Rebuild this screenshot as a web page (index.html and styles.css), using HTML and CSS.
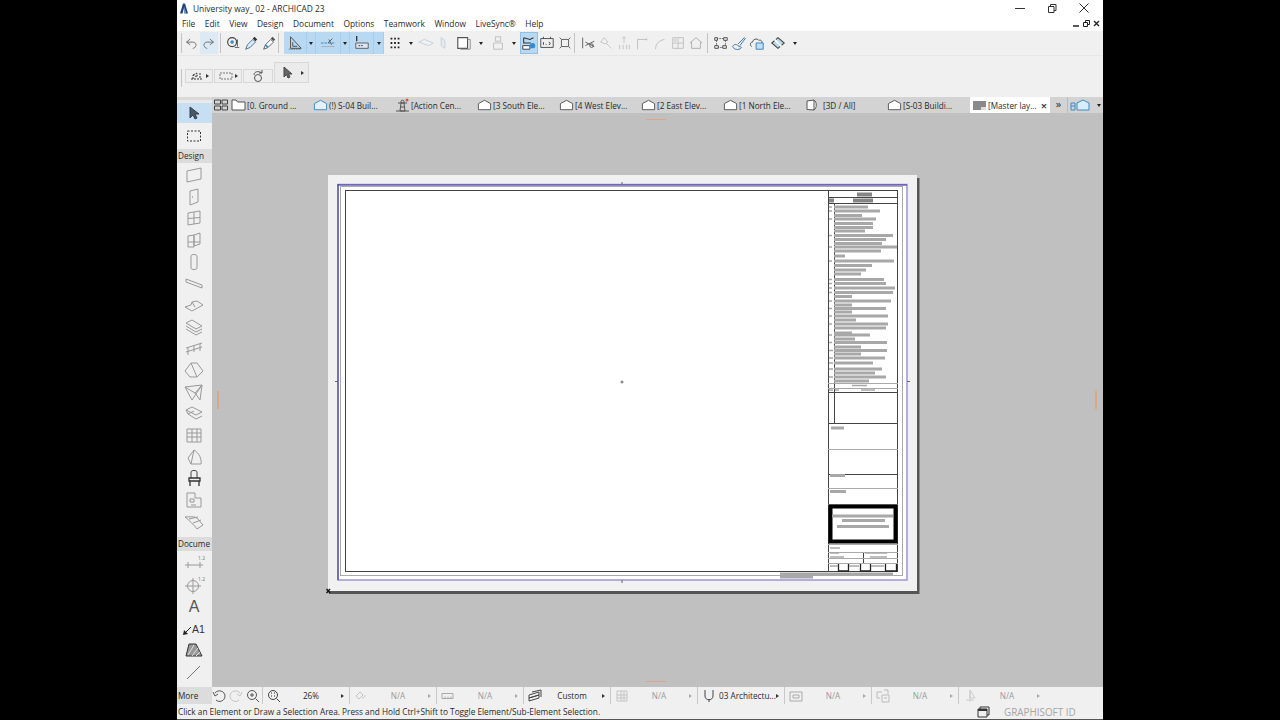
FILE: index.html
```html
<!DOCTYPE html>
<html lang="en">
<head>
    <meta charset="UTF-8">
    <title>University way_ 02 - ARCHICAD 23</title>
    <link rel="stylesheet" href="styles.css">
</head>
<body>
<svg class="defs" width="0" height="0">
    <symbol id="arch" viewBox="0 0 16 12"><path d="M1.5 11V4.5L8 1l6.500 3.500V11z" fill="#fff" stroke="#555"/></symbol>
    <symbol id="archblue" viewBox="0 0 16 12"><path d="M1.500 11V4.500L8 1l6.500 3.500V11z" fill="#e4f1fb" stroke="#3d8ac7"/></symbol>
</svg>
<div class="window">
    <div class="titlebar">
        <svg class="applogo" width="10" height="11" viewBox="0 0 10 11"><path d="M1 10.500L4 .5h2l3 10H6.500L5 5 3.500 10.500z" fill="#23407a"/><path d="M5 3l2.500 7.500H5z" fill="#6d8fc4"/></svg>
        <span class="apptitle">University way_ 02 - ARCHICAD 23</span>
        <div class="winctl">
            <svg width="12" height="12" viewBox="0 0 12 12"><path d="M1 6.500h10" stroke="#333"/></svg>
            <svg width="12" height="12" viewBox="0 0 12 12"><path d="M2.500 4.500h5.500v6h-5.500zM4.500 4.500v-2h5.500v6h-2" fill="none" stroke="#333"/></svg>
            <svg width="12" height="12" viewBox="0 0 12 12"><path d="M1.500 1.500l9 9M10.500 1.500l-9 9" stroke="#333"/></svg>
        </div>
    </div>
    <div class="menubar">
        <span>File</span><span>Edit</span><span>View</span><span>Design</span><span>Document</span><span>Options</span><span>Teamwork</span><span>Window</span><span>LiveSync®</span><span>Help</span>
        <div class="docctl">
            <svg width="7" height="7" viewBox="0 0 7 7"><path d="M0 6h6" stroke="#222" stroke-width="1.500"/></svg>
            <svg width="7" height="7" viewBox="0 0 7 7"><path d="M.5 2.500h4v4h-4zM2.500 2V.5h4v4H5" fill="none" stroke="#222"/></svg>
            <svg width="7" height="7" viewBox="0 0 7 7"><path d="M1 1l5 5M6 1L1 6" stroke="#222" stroke-width="1.300"/></svg>
        </div>
    </div>

    <div class="toolbar">
        <i class="sep"></i>
        <b class="tb"><svg viewBox="0 0 18 18"><path d="M4 8l4-3.500M4 8l4 3M4 8h7c3 0 4 2 3.500 4s-2 3-3.500 3" fill="none" stroke="#666"/></svg></b>
        <b class="tb hl"><svg viewBox="0 0 18 18"><path d="M14 8l-4-3.500M14 8l-4 3M14 8H7c-3 0-4 2-3.500 4s2 3 3.500 3" fill="none" stroke="#666"/></svg></b>
        <i class="sep gapl"></i>
        <b class="tb"><svg viewBox="0 0 18 18"><circle cx="8" cy="8" r="5" fill="none" stroke="#444" stroke-width="1.300"/><circle cx="8" cy="8" r="2" fill="#3d8ac7"/><path d="M14 5v8M11 14h5" stroke="#555"/></svg></b>
        <b class="tb"><svg viewBox="0 0 18 18"><path d="M3 16l2-5 6-6 3 3-6 6z" fill="#dfe9f2" stroke="#3a6a94"/><path d="M11 4l2-2 3 3-2 2z" fill="#333"/></svg></b>
        <b class="tb"><svg viewBox="0 0 18 18"><path d="M3 16l2-5 6-6 3 3-6 6z" fill="#fff" stroke="#555"/><path d="M11 4l2-2 3 3-2 2z" fill="#555"/><path d="M5 11l3 3" stroke="#3d8ac7" stroke-width="2"/></svg></b>
        <i class="sep"></i>
        <div class="bluegroup">
            <b class="tb w22"><svg viewBox="0 0 18 18"><path d="M4 2v13h12zM6.500 8v4.700h5" fill="none" stroke="#444"/><path d="M2 16h14" stroke="#555" stroke-dasharray="1 1"/></svg></b>
            <b class="dd split"></b>
            <b class="tb w24"><svg viewBox="0 0 18 18"><path d="M1 9h16" stroke="#3a7fb8" stroke-dasharray="3 1"/><path d="M9 9l5-5M10 5l3 6" stroke="#555" fill="none"/><path d="M2 13h14" stroke="#999" stroke-dasharray="2 1"/></svg></b>
            <b class="dd split"></b>
            <b class="tb w23"><svg viewBox="0 0 18 18"><path d="M3 1v6" stroke="#333" stroke-width="1.500"/><path d="M2 9h14v6H2z" fill="#dbe8f2" stroke="#555"/><path d="M5 12h6" stroke="#333" stroke-dasharray="2 1"/></svg></b>
            <b class="dd split w11"></b>
        </div>
        <b class="tb"><svg viewBox="0 0 18 18"><path d="M5 3v2M9 3v2M13 3v2M5 8v2M9 8v2M13 8v2M5 13v2M9 13v2M13 13v2" stroke="#222" stroke-width="2"/></svg></b>
        <b class="dd w14"></b>
        <b class="tb w16"><svg viewBox="0 0 18 18"><path d="M1 8l6-3 10 4-5 3z" fill="#eef2f5" stroke="#c3cdd6"/></svg></b>
        <b class="tb w18m"><svg viewBox="0 0 18 18"><path d="M7 3l4 3v9l-4-3z" fill="#e6ecf1" stroke="#c3cdd6"/></svg></b>
        <b class="tb"><svg viewBox="0 0 18 18"><path d="M2 3h11v12H2z" fill="#fff" stroke="#555" stroke-width="1.300"/><path d="M13 5h3v11H5v-1" fill="none" stroke="#888"/></svg></b>
        <b class="dd w16"></b>
        <b class="tb"><svg viewBox="0 0 18 18"><path d="M6 2h6v5H6zM4 9h10v7H4z" fill="none" stroke="#bbb"/></svg></b>
        <b class="dd w13"></b>
        <b class="tb hl on"><svg viewBox="0 0 18 18"><path d="M3 3l7 2 4-2M3 3v6h8" fill="none" stroke="#333" stroke-width="1.200"/><path d="M2 12h8v4H2z" fill="#fff" stroke="#333"/><circle cx="13" cy="12" r="3" fill="#2e8bd8"/></svg></b>
        <b class="tb"><svg viewBox="0 0 18 18"><path d="M2 4h14v10H2zM5 2v2M13 2v2" fill="none" stroke="#444"/><path d="M5 8v3M8 10v1M11 8c2 0 2 3 0 3" fill="none" stroke="#333"/></svg></b>
        <b class="tb"><svg viewBox="0 0 18 18"><path d="M5 5h8v8H5zM3 3l2 2M15 3l-2 2M3 15l2-2M15 15l-2-2" fill="none" stroke="#555"/></svg></b>
        <i class="sep"></i>
        <b class="tb aftersep"><svg viewBox="0 0 18 18"><path d="M3 3v12M6 8l10 5M6 12l10-5" fill="none" stroke="#555"/><circle cx="13" cy="12" r="2" fill="none" stroke="#555"/></svg></b>
        <b class="tb"><svg viewBox="0 0 18 18"><path d="M3 8l4-5 4 5-3 2zM9 9l6 6" fill="none" stroke="#c2c2c2"/></svg></b>
        <b class="tb"><svg viewBox="0 0 18 18"><path d="M9 2v7M7 4l2-2 2 2M4 11v5M8 11v5M12 11v5M15 11v5" fill="none" stroke="#c2c2c2"/></svg></b>
        <b class="tb"><svg viewBox="0 0 18 18"><path d="M4 16V5h10" fill="none" stroke="#bbb"/><circle cx="14" cy="5" r="1" fill="#bbb"/></svg></b>
        <b class="tb"><svg viewBox="0 0 18 18"><path d="M4 16c0-6 4-10 10-11" fill="none" stroke="#bbb"/></svg></b>
        <b class="tb"><svg viewBox="0 0 18 18"><path d="M3 3h12v12H3zM9 3v12M3 9h12" fill="none" stroke="#bbb"/><path d="M3 3h6v6H3z" fill="#ddd"/></svg></b>
        <b class="tb"><svg viewBox="0 0 18 18"><path d="M2 9l7-6 7 6M4 8v7h10V8" fill="none" stroke="#aaa"/></svg></b>
        <i class="sep gapr"></i>
        <b class="tb"><svg viewBox="0 0 18 18"><path d="M4 4h10v10H4z" fill="none" stroke="#666" stroke-dasharray="2 1"/><path d="M2 3h3v3H2zM12 3h4v3h-4zM2 12h4v3H2zM11 12h4v3h-4z" fill="#eee" stroke="#444"/></svg></b>
        <b class="tb"><svg viewBox="0 0 18 18"><path d="M2 13c1-3 4-3 6-1s5 1 3 3-8 2-9-2zM8 10l7-7 1 1-6 8" fill="#e6f0f8" stroke="#3a6a94"/></svg></b>
        <b class="tb"><svg viewBox="0 0 18 18"><path d="M3 13c-2-1-2-5 1-5 0-3 5-5 7-2 2-1 5 1 3 4" fill="none" stroke="#444"/><path d="M8 9h8v7H8z" fill="#bfe0f5" stroke="#2e7db8"/></svg></b>
        <b class="tb w20"><svg viewBox="0 0 18 18"><path d="M2 9l7-6 7 6-7 6z" fill="#bcd7ec" stroke="#444" stroke-width="1.200"/><path d="M5 5l8 8" stroke="#fff" stroke-width="2"/></svg></b>
        <b class="dd w13"></b>
    </div>

    <div class="infobar">
        <i class="sep short"></i>
        <div class="chip"><svg width="14" height="10" viewBox="0 0 14 10"><path d="M1 8h12M3 8V4M3 4l4-2v4zM9 3h3M9 6h3" stroke="#333" fill="none" stroke-dasharray="2 1"/></svg><em></em></div>
        <div class="chip"><svg width="14" height="10" viewBox="0 0 14 10"><path d="M1 2h12v6H1z" fill="none" stroke="#777" stroke-dasharray="2 1"/></svg><em></em></div>
        <div class="chip wide"><svg width="14" height="14" viewBox="0 0 14 14"><path d="M3 6c0-3 3-4 6-3l2 1M11 1v3H8" fill="none" stroke="#555"/><circle cx="7" cy="9" r="3.500" fill="none" stroke="#555"/></svg></div>
        <div class="chip big"><svg width="12" height="13" viewBox="0 0 12 13"><path d="M2 1v10l2.500-2.500 1.500 3.500 2-.9L6.500 8H10z" fill="#666" stroke="#444"/></svg><em></em></div>
    </div>

    <div class="main">
        <aside class="toolbox">
            <div class="grip"></div>
            <div class="tool active"><svg width="14" height="14" viewBox="0 0 14 14"><path d="M3 1v11l3-3 2 4 2-1-2-4h4z" fill="#4a5866" stroke="#36414c"/></svg></div>
            <div class="tool marquee"><svg width="16" height="14" viewBox="0 0 16 14"><path d="M1.500 2h13v10h-13z" fill="none" stroke="#333" stroke-dasharray="2 1.500"/></svg></div>
            <div class="group">Design</div>
            <div class="tools">
                <div class="tool"><svg viewBox="0 0 20 18"><path d="M3 5l14-3v11L3 16z" fill="none" stroke="#999"/></svg></div>
                <div class="tool"><svg viewBox="0 0 20 18"><path d="M6 3l8-2v13l-8 3z" fill="none" stroke="#999"/><path d="M8 9h1" stroke="#777"/></svg></div>
                <div class="tool"><svg viewBox="0 0 20 18"><path d="M4 4l12-2v12L4 16zM10 3v12M4 9.500l12-1" fill="none" stroke="#999"/></svg></div>
                <div class="tool"><svg viewBox="0 0 20 18"><path d="M4 5l6-1v12l-6 0zM10 4l6-2v11l-6 2zM4 11h12" fill="none" stroke="#999"/></svg></div>
                <div class="tool"><svg viewBox="0 0 20 18"><path d="M7 3c0-2 6-2 6 0v12c0 2-6 2-6 0z" fill="none" stroke="#999"/></svg></div>
                <div class="tool"><svg viewBox="0 0 20 18"><path d="M2 5l16 6v3L2 8z" fill="none" stroke="#999"/></svg></div>
                <div class="tool"><svg viewBox="0 0 20 18"><path d="M1 11l6-2 1-3 5-1 6 4-11 6zM8 6l3 5" fill="none" stroke="#999"/></svg></div>
                <div class="tool"><svg viewBox="0 0 20 18"><path d="M2 5l6-3 10 6-6 3zM2 8l10 6 6-3M2 11l10 6 6-3" fill="none" stroke="#999"/></svg></div>
                <div class="tool"><svg viewBox="0 0 20 18"><path d="M2 9l16-5M2 13l16-5M4 9v7M10 7v6M16 5v7" fill="none" stroke="#999"/></svg></div>
                <div class="tool"><svg viewBox="0 0 20 18"><path d="M1 10l6-8h6l6 8-6 6H6zM7 2l6 14" fill="none" stroke="#999"/></svg></div>
                <div class="tool"><svg viewBox="0 0 20 18"><path d="M1 4l7 13 10-15zM1 4l10 6 7-8M11 10l5 7 2-15" fill="none" stroke="#999"/></svg></div>
                <div class="tool"><svg viewBox="0 0 20 18"><path d="M2 6l6-3 10 5-6 3zM2 6l2 4 8 5 6-3M4 10l6-3" fill="none" stroke="#999"/></svg></div>
                <div class="tool"><svg viewBox="0 0 20 18"><path d="M3 3h14v13H3zM3 7h14M3 11h14M8 3v13M13 3v13" fill="none" stroke="#999"/></svg></div>
                <div class="tool"><svg viewBox="0 0 20 18"><path d="M10 2L4 10l3 6h10c1-5-2-11-7-14zM10 2l-3 14" fill="none" stroke="#999"/></svg></div>
                <div class="tool"><svg viewBox="0 0 20 18"><path d="M7 9V3c0-2 6-2 6 0v6" fill="none" stroke="#444"/><path d="M5 9h11v3H5zM6 12v5M15 12v5" fill="none" stroke="#333" stroke-width="1.300"/></svg></div>
                <div class="tool"><svg viewBox="0 0 20 18"><path d="M3 2h8v5h6v9H3z" fill="none" stroke="#999"/><path d="M6 8h4v3H6zM7 14h5" stroke="#999" fill="none"/></svg></div>
                <div class="tool"><svg viewBox="0 0 20 18"><path d="M1 4c5 0 9-1 12 1l6 7-6 4c-3-4-8-9-12-12zM5 6l9-2M9 10l8-3" fill="none" stroke="#999"/></svg></div>
            </div>
            <div class="group docume">Docume</div>
            <div class="tools">
                <div class="tool"><svg viewBox="0 0 20 18"><path d="M1 10h18M4 7v6M16 7v6" stroke="#999" fill="none"/></svg><span class="sup">1.2</span></div>
                <div class="tool"><svg viewBox="0 0 20 18"><circle cx="9" cy="10" r="5.500" fill="none" stroke="#999"/><path d="M1 10h16M9 2v16" stroke="#999"/></svg><span class="sup">1.2</span></div>
                <div class="tool"><span class="bigA">A</span></div>
                <div class="tool"><svg class="lblarrow" viewBox="0 0 9 9"><path d="M8 1L2 7" stroke="#222"/><path d="M0 9l5-1-4-4z" fill="#222"/></svg><span class="lbl">A1</span></div>
                <div class="tool"><svg viewBox="0 0 20 18"><path d="M2 15l3-12h7l6 12z" fill="#999" stroke="#333"/><path d="M4 14l6-10M8 15l6-8M12 15l4-4" stroke="#ddd"/></svg></div>
                <div class="tool"><svg viewBox="0 0 20 18"><path d="M3 16L16 3" stroke="#777"/></svg></div>
            </div>
        </aside>

        <section class="work">
            <div class="tabs">
                <div class="tabgrid"><svg width="14" height="12" viewBox="0 0 14 12"><path d="M.5 1h6v4h-6zM8 1h5.500v4H8zM.5 7h6v4h-6zM8 7h5.500v4H8z" fill="none" stroke="#444"/></svg></div>
                <div class="tab"><svg width="15" height="12" viewBox="0 0 15 12"><path d="M1 11V1h4l1.500 2H14v8z" fill="#fff" stroke="#555"/></svg><span>[0. Ground ...</span></div>
                <div class="tab"><svg width="15" height="12"><use href="#archblue"/></svg><span>(!) S-04 Buil...</span></div>
                <div class="tab"><svg width="15" height="14" viewBox="0 0 15 14"><path d="M5 13l1-8h3l1 8zM3 5h9M6 5V3c0-1 3-1 3 0v2M1 13h13M6 9h3" fill="none" stroke="#555"/><circle cx="12" cy="2" r="1.500" fill="#e0503a"/></svg><span>[Action Cen...</span></div>
                <div class="tab"><svg width="15" height="12"><use href="#arch"/></svg><span>[3 South Ele...</span></div>
                <div class="tab"><svg width="15" height="12"><use href="#arch"/></svg><span>[4 West Elev...</span></div>
                <div class="tab"><svg width="15" height="12"><use href="#arch"/></svg><span>[2 East Elev...</span></div>
                <div class="tab"><svg width="15" height="12"><use href="#arch"/></svg><span>[1 North Ele...</span></div>
                <div class="tab threed"><svg width="15" height="12" viewBox="0 0 15 12"><path d="M2 2l7-1c3 2 3 8 0 10l-7-.500zM9 1v10" fill="#fff" stroke="#555"/></svg><span>[3D / All]</span></div>
                <div class="tab"><svg width="15" height="12"><use href="#arch"/></svg><span>[S-03 Buildi...</span></div>
                <div class="tab current"><svg width="15" height="11" viewBox="0 0 15 11"><path d="M1 1h13v9H1z" fill="#8a8a8a"/><path d="M9 7h5v3H9z" fill="#ddd"/></svg><span>[Master lay...</span><u>×</u></div>
                <div class="more">»</div>
                <div class="viewpick"><svg width="21" height="12" viewBox="0 0 21 12"><path d="M7 11V4l6-3 6 3v7z" fill="#d8ecf9" stroke="#3d8ac7"/><path d="M1 11V4h4v7zM1 7h4" fill="none" stroke="#3d8ac7"/></svg><i class="arrow"></i></div>
            </div>
            <div class="canvas">
                <i class="mark mark-top"></i>
                <i class="mark mark-bottom"></i>
                <i class="mark mark-left"></i>
                <i class="mark mark-right"></i>
                <svg class="sheet" width="597" height="424" viewBox="325 172 597 424">
                    <path d="M329 592.500h589V178" fill="none" stroke="#555" stroke-width="3"/>
                    <rect x="328" y="175" width="589" height="416" fill="#f1f1f1"/>
                    <rect x="338" y="184.500" width="569" height="395.500" fill="#fff" stroke="#9d95d6" stroke-width="1.500"/>
                    <path d="M338 185h569M338 184v396" stroke="#3a349a"/>
                    <rect x="340.500" y="186.500" width="562" height="389" fill="none" stroke="#aaa"/>
                    <rect x="345.500" y="190.500" width="552" height="381" fill="#fff" stroke="#444"/>
                    <!-- title block lines -->
                    <path d="M828.500 190v381M834.500 203v220M828 197.500h70M828 203.500h70M828 392.500h70M828 423.500h70M828 474.500h70M863.500 552v11" fill="none" stroke="#444"/>
                    <path d="M828 383.500h70M828 388.500h70M828 449.500h70M828 488.500h70M828 504.500h70M828 544.500h70M828 552.500h70M828 558.500h70M828 563.500h70" fill="none" stroke="#aaa"/>
                    <rect x="830.500" y="506.500" width="65" height="35" fill="#fff" stroke="#000" stroke-width="4"/>
                    <path d="M838.500 564v7h10v-7M860.500 564v7h10v-7M885.500 564v7h11v-7" fill="none" stroke="#222" stroke-width="1.300"/>
                    <!-- greeked notes -->
                    <path class="greek" d="M834 207h34M834 211h46M834 215.500h28M834 219h42M834 223.500h39M834 227.500h39M834 231h31M834 235.500h59M834 239.500h52M834 243.500h48M834 247h63M834 251h47M834 256h11M834 261h60M834 265.500h38M834 270h32M834 274h27M834 279.500h50M834 283.500h52M834 288h61M834 292.500h59M834 296.500h18M834 301h57M834 305h18M834 308.500h52M834 312h18M834 316h54M834 320h22M834 324h54M834 328h52M834 333h18M834 335h36M834 339h21M834 342.500h53M834 347h27M834 350.500h53M834 354h27M834 358h51M834 363h39M834 369h48M834 373h41M834 377h52M834 381h35"/>
                    <path class="greek thin" d="M829 207h3M829 211h3M829 219h3M829 235.500h3M829 247h3M829 261h3M829 279.500h3M829 283.500h3M829 288h3M829 292.500h3M829 301h3M829 308.500h3M829 316h3M829 324h3M829 335h3M829 342.500h3M829 350.500h4M829 358h4M829 363h4M829 369h4M829 377h4M852 385.500h15M829 390h4M835 390h4M861 390h14M830 548h10M830 553h9M865 553h7M871 553h16M830 557h14M870 557h17M830 566h8M849 566h10M871 566h13"/>
                    <path class="greek dark" d="M857 194.500h15M829 200.500h5M853 200.500h20"/>
                    <path class="greek" d="M831 428h13M830 475.500h15M830 491.500h16M832 516h61M842 520.500h43M837 526.500h52M780 574h113M780 577h33"/>
                    <path d="M622 182v2M622 580v3M620.500 382h3M622 380.500v3M335 381.500h3M907 381.500h3" stroke="#666"/>
                    <path d="M326.500 589l3.500 4M330 589l-3.500 4" stroke="#111" stroke-width="1.400"/>
                </svg>
            </div>
        </section>
    </div>

    <div class="statusbar">
        <div class="group morebtn">More</div>
        <div class="viewbtns">
            <svg width="14" height="14" viewBox="0 0 14 14"><path d="M3 4c3-4 10-2 10 3s-6 7-9 4M1 3l2 4 3-2" fill="none" stroke="#555"/></svg>
            <svg width="14" height="14" viewBox="0 0 14 14"><path d="M11 4C8 0 1 2 1 7s6 7 9 4M13 3l-2 4-3-2" fill="none" stroke="#c4c4c4"/></svg>
            <svg width="14" height="14" viewBox="0 0 14 14"><circle cx="6" cy="6" r="4.500" fill="none" stroke="#555"/><path d="M9.500 9.500L13 13M4 6h4M6 4v4" stroke="#555"/></svg>
        </div>
        <div class="seg">
            <svg width="14" height="14" viewBox="0 0 14 14"><circle cx="6" cy="6" r="4.500" fill="none" stroke="#444"/><path d="M9.500 9.500L13 13" stroke="#444"/><path d="M4 4h1M7 4h1M4 7h1M7 7h1" stroke="#222"/></svg>
            <span>26%</span><i class="tri"></i>
        </div>
        <div class="seg off">
            <svg width="14" height="14" viewBox="0 0 14 14"><path d="M2 7l4-4 3 3-4 4zM8 9c2 0 3-1 3-3" fill="none" stroke="#c4c4c4"/></svg>
            <span>N/A</span><i class="tri"></i>
        </div>
        <div class="seg off">
            <svg width="14" height="14" viewBox="0 0 14 14"><path d="M1 4.500h11v5H1zM4 7.500v2M7 7.500v2M10 7.500v2" fill="none" stroke="#aaa"/></svg>
            <span>N/A</span><i class="tri"></i>
        </div>
        <div class="seg">
            <svg width="14" height="14" viewBox="0 0 14 14"><path d="M1 6l10-3v3L1 9zM1 9l10-3v3L1 12zM4 3l9-2v7" fill="none" stroke="#444"/></svg>
            <span>Custom</span><i class="tri"></i>
        </div>
        <div class="seg off">
            <svg width="14" height="14" viewBox="0 0 14 14"><path d="M2 2h10v10H2zM2 6h10M2 9h10M6 2v10M9 2v10" fill="none" stroke="#c4c4c4"/></svg>
            <span>N/A</span><i class="tri"></i>
        </div>
        <div class="seg tight">
            <svg width="14" height="14" viewBox="0 0 14 14"><path d="M3 1v6c0 5 8 5 8 0V1M7 10v3" fill="none" stroke="#444"/></svg>
            <span>03 Architectu...</span><i class="tri"></i>
        </div>
        <div class="seg off">
            <svg width="14" height="14" viewBox="0 0 14 14"><path d="M1 3h12v9H1zM4 6h6v3H4z" fill="none" stroke="#aaa"/></svg>
            <span>N/A</span><i class="tri"></i>
        </div>
        <div class="seg off">
            <svg width="14" height="14" viewBox="0 0 14 14"><path d="M1 3h5M1 3v6h3M8 1h4v4M6 6h7v7H6zM8 9h3" fill="none" stroke="#bbb"/></svg>
            <span>N/A</span><i class="tri"></i>
        </div>
        <div class="seg off">
            <svg width="14" height="14" viewBox="0 0 14 14"><path d="M7 1l5 8H7zM7 1v12M3 11h8" fill="none" stroke="#ccc"/></svg>
            <span>N/A</span><i class="tri"></i>
        </div>
    </div>

    <div class="hintbar">
        <span class="hint">Click an Element or Draw a Selection Area. Press and Hold Ctrl+Shift to Toggle Element/Sub-Element Selection.</span>
        <svg class="palette" width="13" height="12" viewBox="0 0 13 12"><path d="M3 3V1h9v8h-2" fill="none" stroke="#333"/><path d="M1 3h9v8H1z" fill="#f0f0f0" stroke="#333"/><path d="M1 4h9" stroke="#333" stroke-width="2"/></svg>
        <span class="gsid">GRAPHISOFT ID</span>
    </div>
</div>
</body>
</html>
```

FILE: styles.css
```css
html, body {
    margin: 0;
    height: 720px;
    overflow: hidden;
    background: #000;
}
.defs {
    position: absolute;
}
.window {
    width: 926px;
    height: 720px;
    margin-left: 177px;
    display: flex;
    flex-direction: column;
    background: #f0f0f0;
    font-family: "Open Sans", "Noto Sans", sans-serif;
    color: #2a2a2a;
}

/* title + menu */
.titlebar {
    height: 16px;
    background: #fff;
    display: flex;
    align-items: center;
    padding-left: 2px;
    font-size: 8.4px;
}
.applogo {
    margin-right: 4px;
}
.winctl {
    margin-left: auto;
    display: flex;
    gap: 20px;
    padding-right: 13px;
}
.menubar {
    height: 15px;
    background: #fff;
    display: flex;
    align-items: center;
    gap: 9.500px;
    padding-left: 5px;
    font-size: 8.4px;
}
.docctl {
    margin-left: auto;
    display: flex;
    gap: 3px;
    padding-right: 3px;
}

/* toolbars */
.toolbar {
    height: 25px;
    display: flex;
    align-items: center;
    padding-left: 4px;
    border-bottom: 1px solid #e6e6e6;
    box-sizing: border-box;
}
.tb {
    width: 18px;
    height: 22px;
    flex: none;
    display: flex;
    align-items: center;
    justify-content: center;
    box-sizing: border-box;
}
.tb svg {
    width: 16px;
    height: 16px;
}
.hl {
    background: #dceaf5;
}
.on {
    background: #b9d9f2;
    border: 1px solid #8fc0e6;
}
.aftersep { margin-left: 4px; }
.w18m { width: 18px; margin-right: 3px; }
.w20 { width: 20px; margin-left: 2px; }
.w22 { width: 22px; }
.w23 { width: 23px; }
.w24 { width: 24px; }
.sep {
    width: 1px;
    height: 20px;
    flex: none;
    background: #c4c4c4;
}
.gapl {
    margin-left: 2px;
    margin-right: 3px;
}
.gapr {
    margin-left: 2px;
    margin-right: 4px;
}
.bluegroup {
    display: flex;
    height: 22px;
    margin: 0 2px 0 5px;
    background: #b9d9f2;
}
.dd {
    width: 10px;
    height: 22px;
    flex: none;
    display: flex;
    align-items: center;
    justify-content: center;
}
.dd::after {
    content: "";
    border: 2.500px solid transparent;
    border-top: 3px solid #222;
    border-bottom: 0;
}
.split {
    box-sizing: border-box;
    border-left: 1px solid #a5cdec;
    border-right: 1px solid #a5cdec;
}
.w11 { width: 11px; }
.w13 { width: 13px; }
.w14 { width: 14px; }
.w16 { width: 16px; }

.infobar {
    height: 41px;
    display: flex;
    align-items: flex-start;
    padding: 6px 0 0 4px;
    box-sizing: border-box;
}
.short {
    margin-top: 7px;
    height: 18px;
}
.chip {
    width: 28px;
    height: 14px;
    margin: 7px 0 0 1px;
    box-sizing: border-box;
    background: #eeeeee;
    border: 1px solid #d8d8d8;
    display: flex;
    align-items: center;
    justify-content: center;
    gap: 2px;
}
.infobar > .chip:nth-child(2) {
    margin-left: 3px;
}
.chip em, .arrow, .tri {
    display: block;
    width: 0;
    height: 0;
    border-left: 3px solid #333;
    border-top: 2.500px solid transparent;
    border-bottom: 2.500px solid transparent;
}
.wide {
    width: 30px;
}
.big {
    width: 35px;
    height: 21px;
    margin: 0 0 0 1px;
    gap: 7px;
    justify-content: flex-end;
    padding-right: 4px;
    background: #ebebeb;
}

/* middle */
.main {
    height: 590px;
    display: flex;
}
.toolbox {
    width: 35px;
    flex: none;
    display: flex;
    flex-direction: column;
}
.grip {
    height: 6px;
    background: linear-gradient(#d9d9d9 3px, #e9e9e9 3px);
}
.tool {
    height: 21.700px;
    display: flex;
    align-items: center;
    justify-content: center;
    padding-right: 1px;
    box-sizing: border-box;
    position: relative;
    flex: none;
}
.tool > svg {
    width: 20px;
    height: 18px;
}
.tool.active {
    height: 20px;
    background: #c6dff3;
}
.tool.active svg {
    width: 14px;
    height: 14px;
}
.tool.marquee {
    height: 26px;
}
.tool.marquee svg {
    width: 16px;
    height: 14px;
}
.group {
    height: 14px;
    line-height: 14px;
    background: #dcdcdc;
    font-size: 8.200px;
    padding-left: 1px;
    margin-bottom: 1px;
    flex: none;
}
.docume {
    margin: 4px 0 2px;
}
.sup {
    position: absolute;
    top: 2px;
    right: 7px;
    font-size: 5px;
    color: #777;
}
.bigA {
    font-family: "Liberation Sans", sans-serif;
    font-size: 16px;
    color: #555;
}
.tool svg.lblarrow {
    width: 9px;
    height: 9px;
    margin-top: 3px;
}
.lbl {
    font-family: "Liberation Sans", sans-serif;
    font-size: 10.500px;
    color: #333;
}

.work {
    flex: 1;
    display: flex;
    flex-direction: column;
    min-width: 0;
}
.tabs {
    height: 16px;
    flex: none;
    display: flex;
    background: #d3d3d3;
    font-size: 8.200px;
}
.tabgrid {
    width: 19px;
    flex: none;
    display: flex;
    align-items: center;
    justify-content: center;
    padding-right: 1px;
    box-sizing: border-box;
}
.tab {
    width: 82px;
    flex: none;
    box-sizing: border-box;
    display: flex;
    align-items: center;
    gap: 1px;
    white-space: nowrap;
}
.tab svg {
    flex: none;
}
.threed {
    gap: 3px;
}
.tab.current {
    width: 80px;
    margin-left: 1px;
    padding-left: 2px;
    background: #fff;
}
.tab u {
    text-decoration: none;
    margin-left: auto;
    padding-right: 3px;
    font-size: 11px;
    font-weight: 600;
}
.more {
    width: 18px;
    text-align: center;
    font-size: 11px;
    line-height: 14px;
    flex: none;
    border-right: 1px solid #bbb;
    box-sizing: border-box;
}
.viewpick {
    flex: 1;
    display: flex;
    align-items: center;
    padding-left: 2px;
    gap: 6px;
}
.viewpick .arrow {
    border: 2.500px solid transparent;
    border-top: 3px solid #222;
    border-bottom: 0;
}
.canvas {
    flex: 1;
    background: #c0c0c0;
    position: relative;
}
.sheet {
    position: absolute;
    left: 113px;
    top: 59px;
}
.greek {
    fill: none;
    stroke: #a8a8a8;
    stroke-width: 3;
}
.greek.thin {
    stroke-width: 1.500;
}
.greek.dark {
    stroke: #858585;
    stroke-width: 4;
}
.mark {
    position: absolute;
    background: #d9a888;
}
.mark-top {
    left: 434px;
    top: 6px;
    width: 20px;
    height: 1px;
}
.mark-bottom {
    left: 434px;
    top: 568px;
    width: 20px;
    height: 1px;
}
.mark-left {
    left: 5px;
    top: 278px;
    width: 2px;
    height: 18px;
}
.mark-right {
    left: 883px;
    top: 278px;
    width: 2px;
    height: 18px;
}

/* bottom */
.statusbar {
    height: 17px;
    flex: none;
    display: flex;
    font-size: 8.200px;
}
.morebtn {
    width: 35px;
    height: 17px;
    line-height: 17px;
    margin: 0;
    box-sizing: border-box;
}
.viewbtns {
    width: 50px;
    flex: none;
    display: flex;
    align-items: center;
    gap: 3px;
}
.seg {
    width: 87px;
    flex: none;
    box-sizing: border-box;
    border-left: 1px solid #c8c8c8;
    display: flex;
    align-items: center;
    padding: 0 4px;
}
.seg svg {
    flex: none;
}
.seg span {
    flex: 1;
    text-align: center;
    white-space: nowrap;
}
.seg .tri {
    flex: none;
    margin-right: 1px;
}
.seg.off {
    color: #9a9a9a;
}
.seg.off .tri {
    border-left-color: #aaa;
}
.seg.tight span {
    text-align: left;
    margin-left: 3px;
}
.hintbar {
    height: 16px;
    flex: none;
    box-sizing: border-box;
    border-bottom: 1px solid #555;
    display: flex;
    align-items: center;
    padding-left: 1px;
    font-size: 8.250px;
    white-space: nowrap;
}
.palette {
    margin-left: auto;
    margin-right: 14px;
}
.gsid {
    width: 99px;
    box-sizing: border-box;
    color: #a6a6a6;
    font-size: 9.900px;
}
```
